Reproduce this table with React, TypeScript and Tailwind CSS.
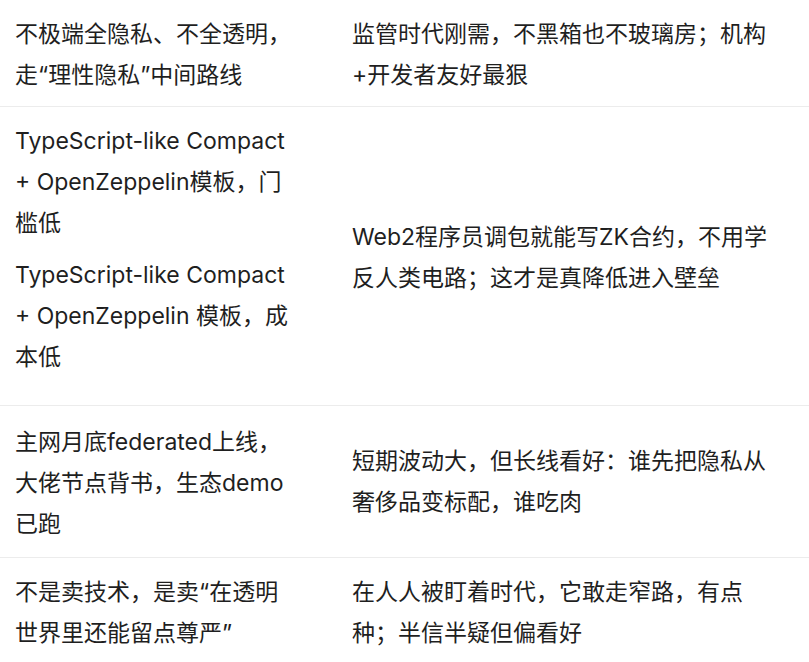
const rows: { left: string[]; right: string; leftPad: string; rightPad: string }[] = [
  {
    left: ['不极端全隐私、不全透明，走“理性隐私”中间路线'],
    right: '监管时代刚需，不黑箱也不玻璃房；机构+开发者友好最狠',
    leftPad: 'pt-[14px] pb-[10px]',
    rightPad: 'pt-[14px] pb-[10px]',
  },
  {
    left: [
      'TypeScript-like Compact + OpenZeppelin模板，门槛低',
      'TypeScript-like Compact + OpenZeppelin 模板，成本低',
    ],
    right: 'Web2程序员调包就能写ZK合约，不用学反人类电路；这才是真降低进入壁垒',
    leftPad: 'pt-[14px] pb-[27px]',
    rightPad: 'pt-[14px] pb-[10px]',
  },
  {
    left: ['主网月底federated上线，大佬节点背书，生态demo已跑'],
    right: '短期波动大，但长线看好：谁先把隐私从奢侈品变标配，谁吃肉',
    leftPad: 'pt-[16px] pb-[12px]',
    rightPad: 'pt-[14px] pb-[14px]',
  },
  {
    left: ['不是卖技术，是卖“在透明世界里还能留点尊严”'],
    right: '在人人被盯着时代，它敢走窄路，有点种；半信半疑但偏看好',
    leftPad: 'pt-[14px] pb-[12px]',
    rightPad: 'pt-[14px] pb-[12px]',
  },
]

export default function App() {
  return (
    <div className="w-[809px] h-[662px] overflow-hidden bg-white text-[#1f1f1f] text-[23px] leading-[41px] font-['Inter','Noto_Sans_CJK_SC',sans-serif]">
      {rows.map((row, i) => (
        <div
          key={i}
          className={`grid grid-cols-[337px_1fr] ${i < rows.length - 1 ? 'border-b border-[#ececec]' : ''}`}
        >
          <div className={`pl-[15px] pr-[41px] ${row.leftPad} flex flex-col gap-[11px]`}>
            {row.left.map((p, j) => (
              <div key={j}>{p}</div>
            ))}
          </div>
          <div className={`pl-[15px] pr-[29px] ${row.rightPad} flex items-center`}>
            <div>{row.right}</div>
          </div>
        </div>
      ))}
    </div>
  )
}
